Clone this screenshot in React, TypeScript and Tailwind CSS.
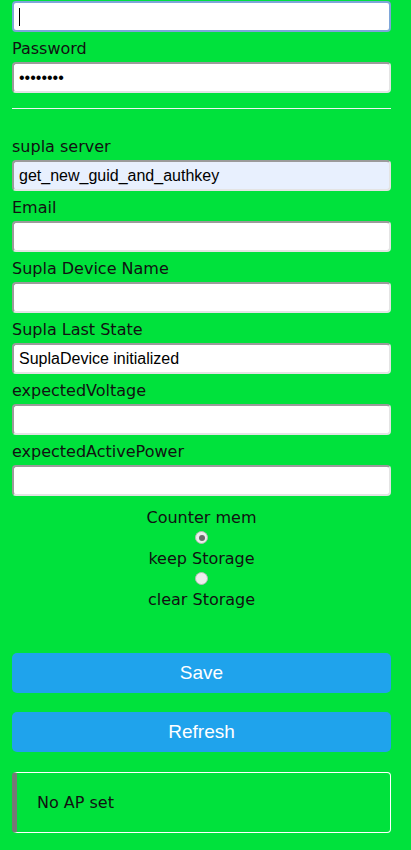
import React from "react"

const labelCls = "block h-[20px] leading-[23px] text-[16px] text-[#111] font-['DejaVu_Sans',sans-serif]"
const inputCls =
  "block w-full h-[31px] my-[5px] px-[5px] rounded-[4px] border-2 border-t-[#9b9b9b] border-l-[#9b9b9b] border-b-[#e4e4e4] border-r-[#e4e4e4] bg-white text-[16px] text-black font-['Liberation_Sans',Arial,sans-serif] outline-none"

function Field({ label, value, autofill }: { label: string; value?: string; autofill?: boolean }) {
  return (
    <div>
      <label className={labelCls}>{label}</label>
      <input readOnly defaultValue={value ?? ""} className={inputCls + (autofill ? " !bg-[#e8f0fe]" : "")} />
    </div>
  )
}

function Radio({ checked }: { checked?: boolean }) {
  return (
    <div className="h-[21px] flex items-center justify-center">
      <span className="w-[13px] h-[13px] rounded-full border border-[#b8b8b8] bg-[#ececec] flex items-center justify-center">
        {checked && <span className="w-[6px] h-[6px] rounded-full bg-[#6b6b6b]" />}
      </span>
    </div>
  )
}

export default function App() {
  return (
    <div className="min-h-screen bg-[#00e23c] font-['DejaVu_Sans',sans-serif]">
      <div className="ml-[12px] w-[379px] pt-[1px] pb-[18px]">
        {/* focused ssid field */}
        <div className="relative h-[31px] mb-[5px] rounded-[4px] border-2 border-[#7ea6d9] bg-white">
          <span className="absolute left-[5px] top-[5px] w-[1px] h-[18px] bg-black" />
        </div>

        <label className={labelCls}>Password</label>
        <input readOnly type="password" defaultValue="12345678" className={inputCls} />

        <div className="mt-[15px] h-[1px] bg-[#f2f2f2]" />

        <div className="h-[26px]" />
        <Field label="supla server" value="get_new_guid_and_authkey" autofill />
        <Field label="Email" />
        <Field label="Supla Device Name" />
        <Field label="Supla Last State" value="SuplaDevice initialized" />
        <Field label="expectedVoltage" />
        <Field label="expectedActivePower" />

        <div className="mt-[11px] text-center text-[16px] text-[#111]">
          <div className="h-[20px] leading-[22px]">Counter mem</div>
          <Radio checked />
          <div className="h-[20px] leading-[22px]">keep Storage</div>
          <Radio />
          <div className="h-[20px] leading-[22px]">clear Storage</div>
        </div>

        <button className="mt-[44px] block w-full h-[40px] rounded-[5px] bg-[#1fa3ec] text-white text-[19px] font-['Liberation_Sans',Arial,sans-serif]">
          Save
        </button>
        <button className="mt-[19px] block w-full h-[40px] rounded-[5px] bg-[#1fa3ec] text-white text-[19px] font-['Liberation_Sans',Arial,sans-serif]">
          Refresh
        </button>

        <div className="mt-[20px] h-[61px] flex items-center pl-[20px] rounded-[4px] border border-white border-l-[5px] border-l-[#777777] text-[16px] text-[#111]">
          No AP set
        </div>
      </div>
    </div>
  )
}
